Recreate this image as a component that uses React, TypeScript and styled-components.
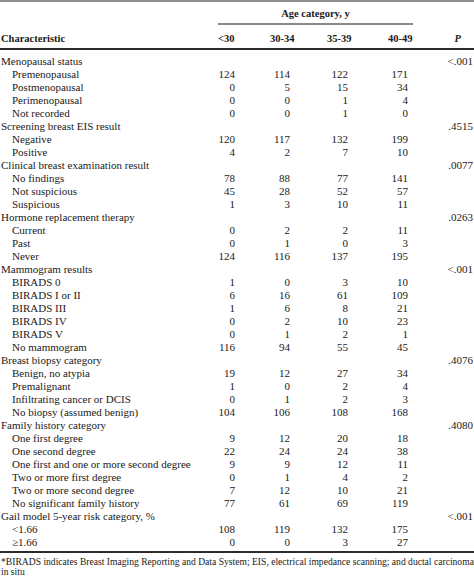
import { Fragment } from "react";
import styled, { createGlobalStyle } from "styled-components";

const GlobalStyle = createGlobalStyle`
  html, body {
    margin: 0;
    padding: 0;
    background: #ffffff;
  }
  body {
    font-family: "Liberation Serif", "Times New Roman", serif;
    color: #1a1a1a;
  }
`;

const COLS = "218px 52px 57px 61px 25px 61px";
const NUM_WIDTHS = [17, 20, 21, 20];

const Page = styled.div`
  width: 474px;
  display: flex;
  flex-direction: column;
`;

const TopBar = styled.div`
  height: 2px;
  background: #8f8f8f;
`;

const HeadGrid = styled.div`
  display: grid;
  grid-template-columns: ${COLS};
  padding-top: 5px;
  border-bottom: 2px solid #2b2b2b;
  padding-bottom: 3px;
`;

const GroupHead = styled.div`
  grid-column: 2 / 6;
  text-align: center;
  font-weight: bold;
  font-size: 10.5px;
  line-height: 13px;
  padding-bottom: 3px;
  border-bottom: 2px solid #8a8a8a;
  margin-bottom: 7px;
`;

const HeadCell = styled.div<{ $align?: string; $pad?: number }>`
  font-weight: bold;
  font-size: 10.5px;
  line-height: 13px;
  text-align: ${(p) => p.$align || "left"};
  padding-left: ${(p) => (p.$align === "right" ? 0 : p.$pad ?? 0)}px;
  padding-right: ${(p) => (p.$align === "right" ? p.$pad ?? 0 : 0)}px;
  white-space: nowrap;
`;

const PHead = styled(HeadCell)`
  font-style: italic;
`;

const Body = styled.div`
  display: grid;
  grid-template-columns: ${COLS};
  padding-top: 5px;
  padding-bottom: 2px;
  border-bottom: 2px solid #2b2b2b;
`;

const Label = styled.div<{ $sub?: boolean }>`
  font-size: 11px;
  line-height: 13px;
  padding-left: ${(p) => (p.$sub ? 12 : 1)}px;
  white-space: nowrap;
`;

const NumCell = styled.div<{ $w: number }>`
  font-size: 11px;
  line-height: 13px;
  width: ${(p) => p.$w}px;
  text-align: right;
  white-space: nowrap;
`;

const Empty = styled.div``;

const PCell = styled.div`
  font-size: 11px;
  line-height: 13px;
  text-align: right;
  padding-right: 1px;
  white-space: nowrap;
`;

const Footnote = styled.div`
  font-size: 9.6px;
  line-height: 9.5px;
  padding-top: 4px;
  padding-left: 1px;
`;

type Group = {
  title: string;
  p: string;
  rows: [string, number[]][];
};

const groups: Group[] = [
  {
    title: "Menopausal status",
    p: "<.001",
    rows: [
      ["Premenopausal", [124, 114, 122, 171]],
      ["Postmenopausal", [0, 5, 15, 34]],
      ["Perimenopausal", [0, 0, 1, 4]],
      ["Not recorded", [0, 0, 1, 0]],
    ],
  },
  {
    title: "Screening breast EIS result",
    p: ".4515",
    rows: [
      ["Negative", [120, 117, 132, 199]],
      ["Positive", [4, 2, 7, 10]],
    ],
  },
  {
    title: "Clinical breast examination result",
    p: ".0077",
    rows: [
      ["No findings", [78, 88, 77, 141]],
      ["Not suspicious", [45, 28, 52, 57]],
      ["Suspicious", [1, 3, 10, 11]],
    ],
  },
  {
    title: "Hormone replacement therapy",
    p: ".0263",
    rows: [
      ["Current", [0, 2, 2, 11]],
      ["Past", [0, 1, 0, 3]],
      ["Never", [124, 116, 137, 195]],
    ],
  },
  {
    title: "Mammogram results",
    p: "<.001",
    rows: [
      ["BIRADS 0", [1, 0, 3, 10]],
      ["BIRADS I or II", [6, 16, 61, 109]],
      ["BIRADS III", [1, 6, 8, 21]],
      ["BIRADS IV", [0, 2, 10, 23]],
      ["BIRADS V", [0, 1, 2, 1]],
      ["No mammogram", [116, 94, 55, 45]],
    ],
  },
  {
    title: "Breast biopsy category",
    p: ".4076",
    rows: [
      ["Benign, no atypia", [19, 12, 27, 34]],
      ["Premalignant", [1, 0, 2, 4]],
      ["Infiltrating cancer or DCIS", [0, 1, 2, 3]],
      ["No biopsy (assumed benign)", [104, 106, 108, 168]],
    ],
  },
  {
    title: "Family history category",
    p: ".4080",
    rows: [
      ["One first degree", [9, 12, 20, 18]],
      ["One second degree", [22, 24, 24, 38]],
      ["One first and one or more second degree", [9, 9, 12, 11]],
      ["Two or more first degree", [0, 1, 4, 2]],
      ["Two or more second degree", [7, 12, 10, 21]],
      ["No significant family history", [77, 61, 69, 119]],
    ],
  },
  {
    title: "Gail model 5-year risk category, %",
    p: "<.001",
    rows: [
      ["<1.66", [108, 119, 132, 175]],
      ["≥1.66", [0, 0, 3, 27]],
    ],
  },
];

export default function App() {
  return (
    <Page>
      <GlobalStyle />
      <TopBar />
      <HeadGrid>
        <GroupHead>Age category, y</GroupHead>
        <Empty />
        <HeadCell $pad={1}>Characteristic</HeadCell>
        <HeadCell>&lt;30</HeadCell>
        <HeadCell>30-34</HeadCell>
        <HeadCell>35-39</HeadCell>
        <HeadCell>40-49</HeadCell>
        <PHead $align="right" $pad={13}>
          P
        </PHead>
      </HeadGrid>
      <Body>
        {groups.map((g) => (
          <Fragment key={g.title}>
            <Label>{g.title}</Label>
            <Empty />
            <Empty />
            <Empty />
            <Empty />
            <PCell>{g.p}</PCell>
            {g.rows.map(([label, nums]) => (
              <Fragment key={label}>
                <Label $sub>{label}</Label>
                {nums.map((n, i) => (
                  <NumCell key={i} $w={NUM_WIDTHS[i]}>
                    {n}
                  </NumCell>
                ))}
                <Empty />
              </Fragment>
            ))}
          </Fragment>
        ))}
      </Body>
      <Footnote>
        *BIRADS indicates Breast Imaging Reporting and Data System; EIS,
        electrical impedance scanning; and ductal carcinoma in situ
      </Footnote>
    </Page>
  );
}
